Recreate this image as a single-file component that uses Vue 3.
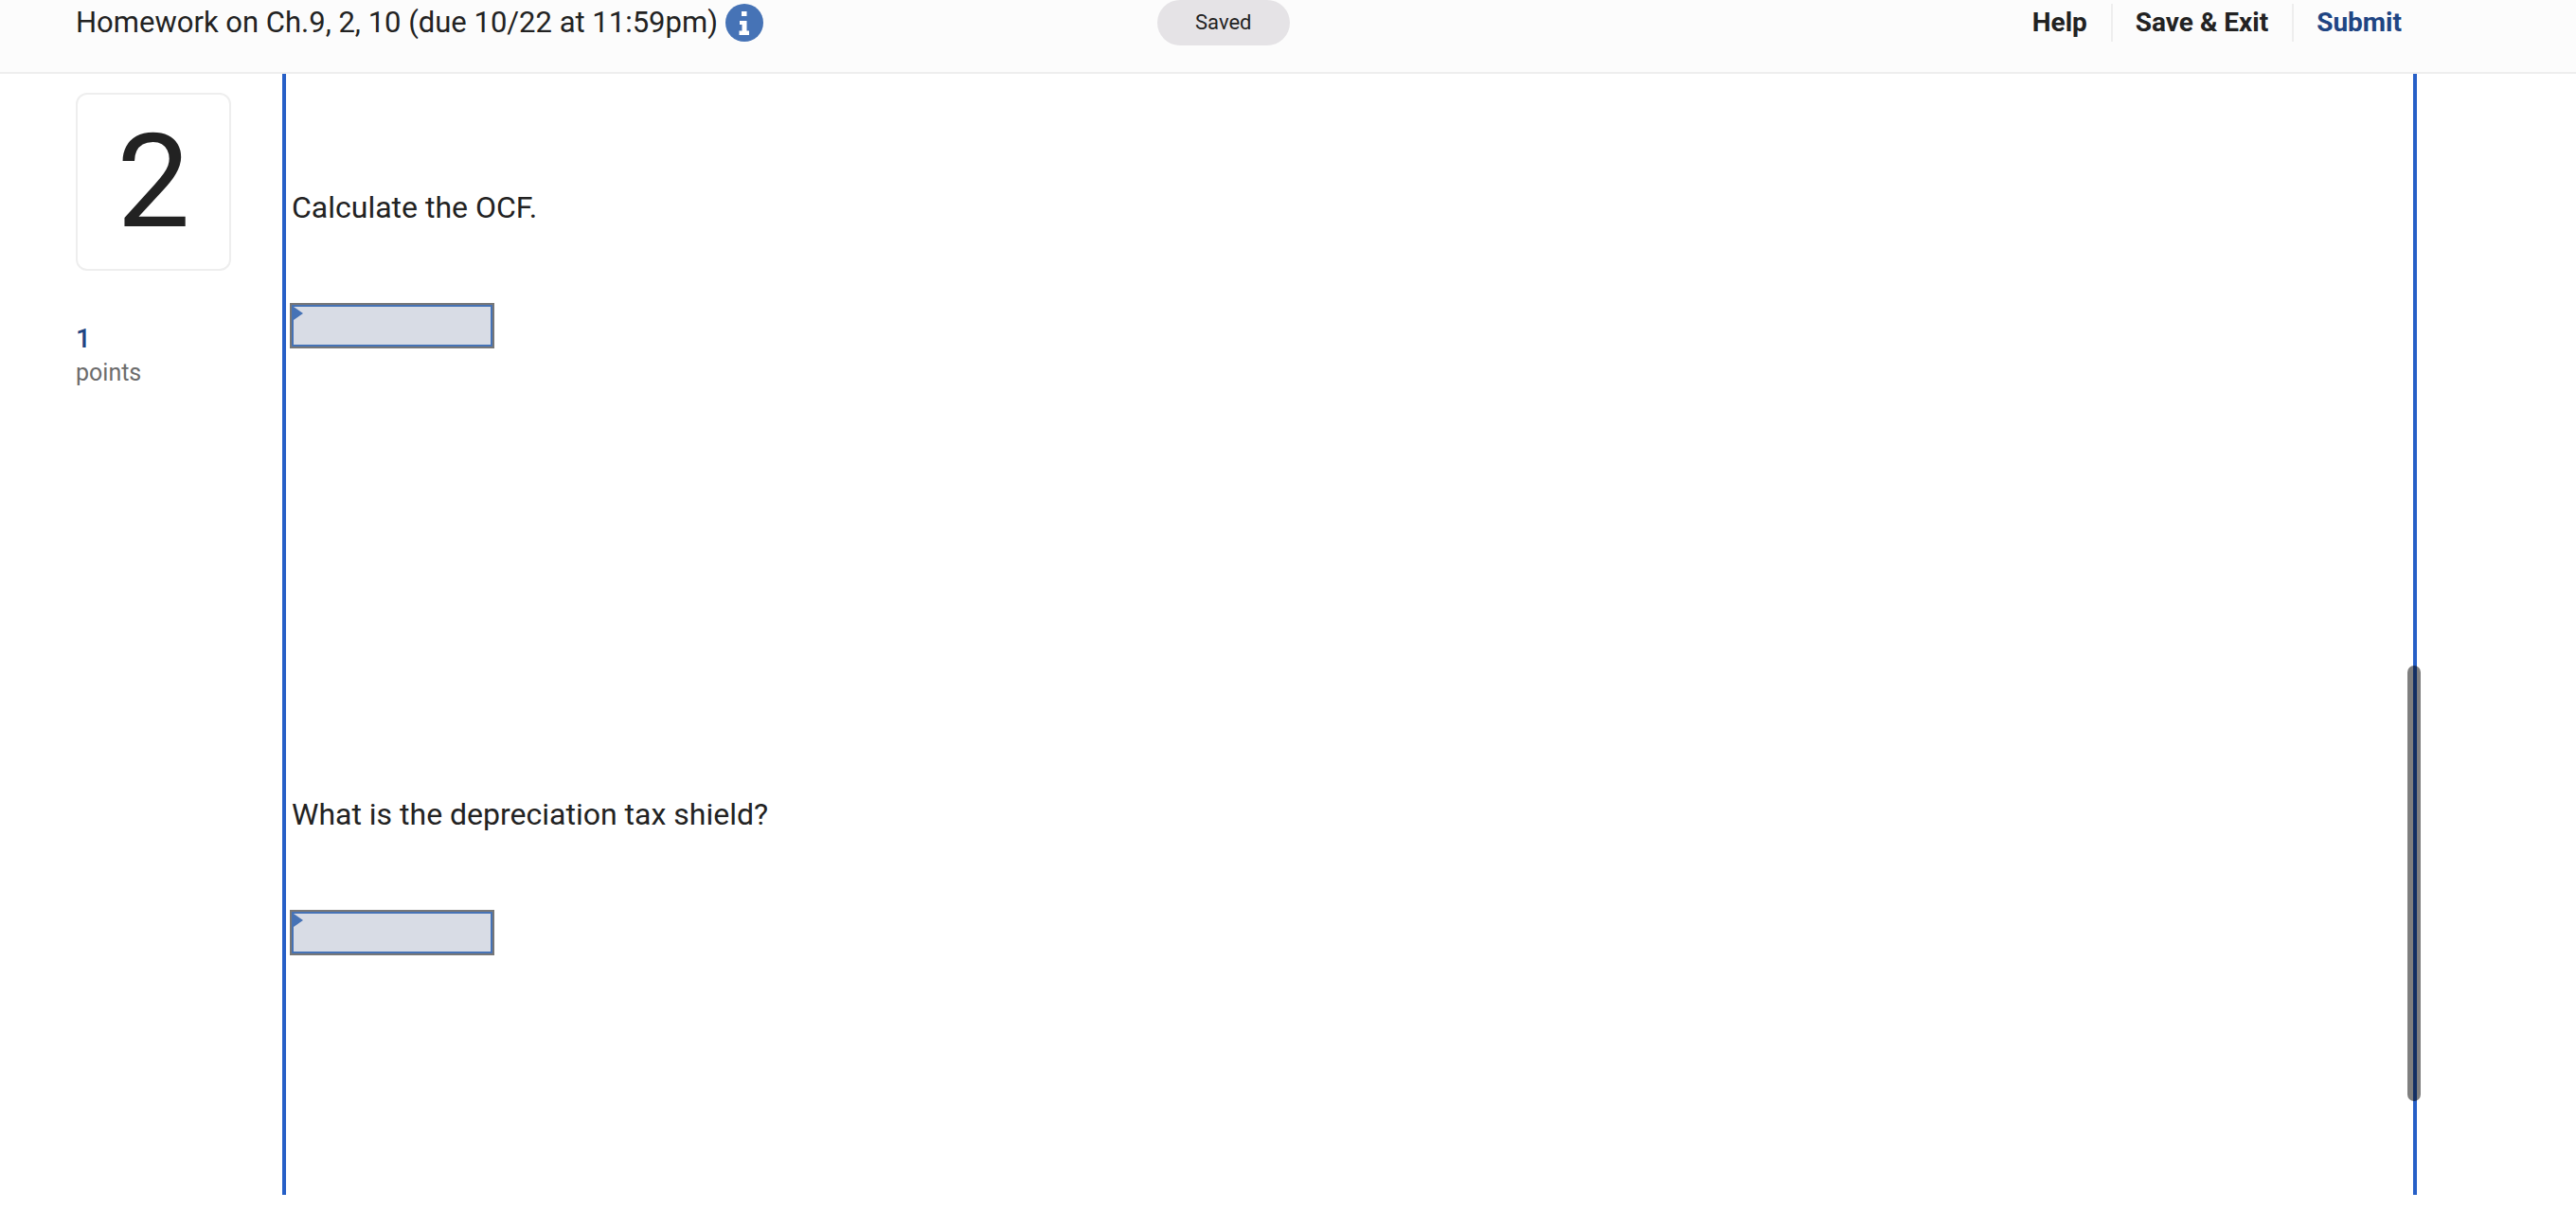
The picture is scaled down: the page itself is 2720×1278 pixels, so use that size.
<script setup>
import { ref } from 'vue'

const title = 'Homework on Ch.9, 2, 10 (due 10/22 at 11:59pm)'
const number = 2
const points = 1

const questions = ref([
    { id: 'ocf', text: 'Calculate the OCF.', answer: '' },
    { id: 'shield', text: 'What is the depreciation tax shield?', answer: '' }
])
</script>

<template>
    <div class="page">
        <header class="topbar">
            <div class="topbar_title">
                <h1>{{ title }}</h1>
                <button type="button" class="info" aria-label="Assignment information">
                    <svg viewBox="0 0 40 40" width="40" height="40" aria-hidden="true">
                        <circle cx="20" cy="20" r="20" fill="#4673b6" />
                        <path d="M17 8h5.5v5H17zM15 18h7.5v10.500H25V33H14.500v-4.500h3V22H15z" fill="#fff" />
                    </svg>
                </button>
            </div>
            <div class="topbar_right">
                <span class="status">Saved</span>
                <nav class="actions">
                    <button type="button">Help</button>
                    <button type="button">Save &amp; Exit</button>
                    <button type="button" class="submit">Submit</button>
                </nav>
            </div>
        </header>

        <main class="content">
            <aside class="sidebar">
                <div class="number">{{ number }}</div>
                <div class="points">{{ points }}</div>
                <div class="points_label">points</div>
            </aside>
            <section class="sheet">
                <div v-for="q in questions" :key="q.id" class="question">
                    <label :for="q.id">{{ q.text }}</label>
                    <div class="answer">
                        <input :id="q.id" v-model="q.answer" type="text" autocomplete="off">
                        <svg class="marker" viewBox="0 0 10 14" width="10" height="14" aria-hidden="true">
                            <path d="M0 0l10 7-10 7z" fill="#4673b6" />
                        </svg>
                    </div>
                </div>
                <div class="scroll_thumb"></div>
            </section>
        </main>
    </div>
</template>

<style>
    body{
        margin: 0;
        background: #fff;
    }
</style>

<style scoped>
    .page{
        display: flex;
        flex-direction: column;
        min-height: 100vh;
        box-sizing: border-box;
        padding-bottom: 16px;
        font-family: Roboto, "Liberation Sans", sans-serif;
        color: #222;
    }
    button{
        border: 0;
        padding: 0;
        background: none;
        font: inherit;
        color: inherit;
        cursor: pointer;
    }
    .topbar{
        display: grid;
        grid-template-columns: 465fr 535fr;
        padding: 0 184px 28px 80px;
        background: #fcfcfc;
        border-bottom: 2px solid #eee;
    }
    .topbar_title{
        display: flex;
        align-items: center;
        gap: 8px;
    }
    h1{
        margin: 0;
        font-size: 31px;
        line-height: 40px;
        font-weight: 400;
        white-space: nowrap;
    }
    .info{
        display: flex;
    }
    .topbar_right{
        display: flex;
        align-items: center;
        justify-content: space-between;
    }
    .status{
        padding: 0 40px;
        border-radius: 24px;
        background: #e5e3e6;
        font-size: 22px;
        line-height: 48px;
    }
    .actions{
        display: flex;
        font-size: 28px;
        font-weight: 700;
    }
    .actions button{
        line-height: 40px;
        white-space: nowrap;
    }
    .actions button + button{
        margin-left: 25px;
        padding-left: 24px;
        border-left: 2px solid #eee;
    }
    .actions .submit{
        color: #1f4583;
    }
    .content{
        display: flex;
        flex: 1;
        padding-right: 168px;
    }
    .sidebar{
        flex: none;
        box-sizing: border-box;
        width: 298px;
        padding: 20px 54px 0 80px;
    }
    .number{
        border: 2px solid #eee;
        border-radius: 12px;
        font-size: 138px;
        line-height: 184px;
        text-align: center;
    }
    .points{
        margin-top: 54px;
        font-size: 28px;
        font-weight: 500;
        line-height: 36px;
        color: #1f4583;
    }
    .points_label{
        font-size: 25px;
        line-height: 36px;
        color: #6c6c6c;
    }
    .sheet{
        position: relative;
        flex: 1;
        border: solid #265fc7;
        border-width: 0 4px;
        padding: 121px 4px 0;
    }
    .question{
        margin-bottom: 472px;
    }
    .question:nth-child(2){
        margin-bottom: 0;
    }
    label{
        display: block;
        padding-left: 2px;
        font-size: 32px;
        line-height: 40px;
    }
    .answer{
        position: relative;
        width: 216px;
        margin-top: 81px;
    }
    input{
        display: block;
        box-sizing: border-box;
        width: 100%;
        height: 48px;
        border: 2px solid #777;
        border-radius: 0;
        padding: 0 16px;
        background: #d8dce5;
        box-shadow: inset 0 0 0 2px #4673b6;
        font: inherit;
        font-size: 28px;
        outline: 0;
    }
    .marker{
        position: absolute;
        top: 4px;
        left: 4px;
    }
    .scroll_thumb{
        position: absolute;
        top: 625px;
        right: -8px;
        width: 14px;
        height: 460px;
        border-radius: 7px;
        background: rgba(0, 0, 0, .5);
    }
</style>
